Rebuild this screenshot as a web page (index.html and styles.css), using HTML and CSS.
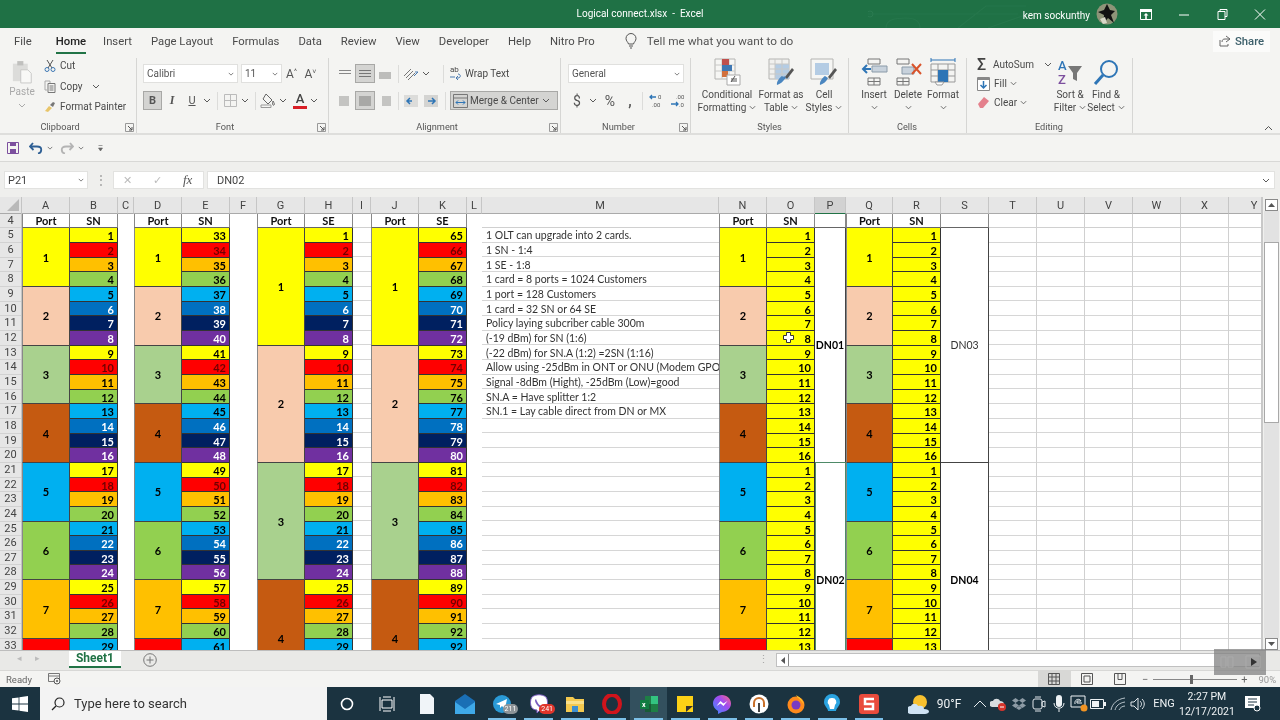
FILE: index.html
```html
<!DOCTYPE html>
<html lang="en">
<head>
<meta charset="utf-8">
<title>Logical connect.xlsx - Excel</title>
<link rel="stylesheet" href="styles.css">
</head>
<body>
<svg class="sprite" aria-hidden="true">
  <symbol id="chev" viewBox="0 0 8 5"><path d="M1 1l3 3 3-3" fill="none" stroke="#5a5a5a" stroke-width="1"/></symbol>
  <symbol id="launch" viewBox="0 0 9 9"><path d="M.5.5h8v8h-8z" fill="none" stroke="#999"/><path d="M3 3l4 4M7 4v3H4" fill="none" stroke="#555"/></symbol>
</svg>
<div class="app">
  <header class="titlebar">
    <svg class="circuit" viewBox="0 0 170 28" width="170" height="28"><path d="M0 14h150M18 28c0-9 10-10 20-10s14 4 14 10M90 28l28-22h40M120 28l40-14" fill="none" stroke="#2a7a50" stroke-width="1.2" opacity=".6"/><circle cx="2" cy="14" r="3" fill="none" stroke="#2a7a50"/></svg>
    <div></div>
    <div class="doc-title">Logical connect.xlsx&nbsp; - &nbsp;Excel</div>
    <div class="title-right">
      <span class="user">kem sockunthy</span>
      <svg class="avatar" viewBox="0 0 22 22" width="22" height="22"><circle cx="11" cy="11" r="10.5" fill="#8e9478"/><path d="M11 1l3 6 5 1-4 4 3 8-6-5-5 6 1-9-6-3 6-2z" fill="#111"/><path d="M4 16l5-2 2 6-4 1z" fill="#d8d8c8"/></svg>
      <svg class="win-btn" viewBox="0 0 12 11" width="12" height="11"><path d="M.5.5h11v10H.5z" fill="none" stroke="#fff"/><path d="M0 0h12v3H0zM6 4L3.500 6.500h1.700V10h1.600V6.500h1.700z" fill="#fff"/></svg>
      <svg class="win-btn" viewBox="0 0 12 11" width="12" height="11"><path d="M1 6h10" stroke="#fff"/></svg>
      <svg class="win-btn" viewBox="0 0 12 11" width="12" height="11"><path d="M2 2.500h7v8H2zM4 2.500V.5h7v7H9" fill="none" stroke="#fff"/></svg>
      <svg class="win-btn" viewBox="0 0 12 11" width="12" height="11"><path d="M1 .5l10 10M11 .5l-10 10" stroke="#fff"/></svg>
    </div>
  </header>

  <nav class="tabs">
    <span>File</span><span class="on">Home</span><span>Insert</span><span>Page Layout</span><span>Formulas</span><span>Data</span><span>Review</span><span>View</span><span>Developer</span><span>Help</span><span>Nitro Pro</span>
    <svg class="bulb" viewBox="0 0 12 16" width="12" height="16"><path d="M3.500 11C3 9 1 8 1 5.500a5 5 0 0 1 10 0C11 8 9 9 8.500 11zM4 13h4M5 15h2" fill="none" stroke="#555"/></svg>
    <span class="tell">Tell me what you want to do</span>
    <span class="share"><svg viewBox="0 0 12 12" width="12" height="12"><path d="M7 1l4 3-4 3M11 4H6C4 4 3 5 3 7M1 5v6h8V9" fill="none" stroke="#666"/></svg>Share</span>
  </nav>

  <section class="ribbon">
    <div class="group g-clip">
      <div class="gbody">
        <div class="paste">
          <svg viewBox="0 0 24 27" width="21" height="24"><path d="M1 4h17v20H1z" fill="#dcdcda"/><path d="M6 1h7v5H6z" fill="#c0c0be"/><path d="M10 11h8l4 4v11H10z" fill="#f8f8f6" stroke="#c4c4c2"/></svg>
          <span>Paste</span>
          <svg class="ch" viewBox="0 0 8 5" width="8" height="5"><path d="M1 1l3 3 3-3" fill="none" stroke="#aaa"/></svg>
        </div>
        <div class="small-col">
          <div class="srow"><svg viewBox="0 0 12 13" width="12" height="13"><path d="M3 1l5 8M9 1L4 9" stroke="#555" fill="none"/><circle cx="3" cy="10.500" r="2" fill="none" stroke="#3f78b4"/><circle cx="9" cy="10.500" r="2" fill="none" stroke="#3f78b4"/></svg>Cut</div>
          <div class="srow"><svg viewBox="0 0 12 13" width="12" height="13"><path d="M1 1h5v2M1 1v9h2" fill="none" stroke="#aaa"/><path d="M4 3.500h7v9H4zM5.500 6h4M5.500 8h4M5.500 10h4" fill="none" stroke="#777"/></svg>Copy<svg class="ch ml" width="8" height="5"><use href="#chev"/></svg></div>
          <div class="srow"><svg viewBox="0 0 12 13" width="12" height="13"><path d="M1 11l4-5 3 2-4 4z" fill="#e8c56a"/><path d="M6 5l3-3 2 1-2 4z" fill="#777"/></svg>Format Painter</div>
        </div>
      </div>
      <div class="glabel lp">Clipboard<svg class="launcher" width="9" height="9"><use href="#launch"/></svg></div>
    </div>

    <div class="group g-font">
      <div class="gbody stack">
        <div class="trow">
          <div class="combo w95">Calibri<svg class="ch" width="6" height="4"><use href="#chev"/></svg></div>
          <div class="combo w41">11<svg class="ch" width="6" height="4"><use href="#chev"/></svg></div>
          <span class="ab">A<sup>^</sup></span><span class="ab">A<sup>˅</sup></span>
        </div>
        <div class="trow">
          <span class="tb active w19"><b>B</b></span><span class="tb w20"><i class="serif">I</i></span><span class="tb w20"><u>U</u></span><svg class="ch w10" width="8" height="5"><use href="#chev"/></svg>
          <i class="vs"></i>
          <span class="tb w20"><svg viewBox="0 0 13 13" width="13" height="13"><path d="M.5.5h12v12H.5zM6.500.5v12M.5 6.500h12" fill="none" stroke="#bbb"/></svg></span><svg class="ch w10" width="8" height="5"><use href="#chev"/></svg>
          <i class="vs"></i>
          <span class="tb w20"><svg viewBox="0 0 16 15" width="16" height="15"><path d="M6 1l6 6-4 4-5-5zM13 8c1 2 2 3 1 4s-2-1-1-4z" fill="#f4f4f2" stroke="#666"/><path d="M1 12h10v2.500H1z" fill="#f4f4f2" stroke="#999"/></svg></span><svg class="ch w10" width="8" height="5"><use href="#chev"/></svg>
          <span class="tb w20 a-red">A</span><svg class="ch w10" width="8" height="5"><use href="#chev"/></svg>
        </div>
      </div>
      <div class="glabel lp">Font<svg class="launcher" width="9" height="9"><use href="#launch"/></svg></div>
    </div>

    <div class="group g-align">
      <div class="gbody stack">
        <div class="trow">
          <span class="tb w20"><svg viewBox="0 0 14 14" width="14" height="14"><path d="M1 3.500h12M1 6.500h12" stroke="#888"/></svg></span>
          <span class="tb active w20"><svg viewBox="0 0 14 14" width="14" height="14"><path d="M1 3.500h12M1 6.500h12M1 9.500h12" stroke="#777"/></svg></span>
          <span class="tb w20"><svg viewBox="0 0 14 14" width="14" height="14"><path d="M1 5h12v7H1z" fill="#bdbdbb"/></svg></span>
          <i class="vs v3"></i>
          <span class="tb w20"><svg viewBox="0 0 16 14" width="16" height="14"><path d="M1 9l7-7M3 11l7-7M5 13l7-7" stroke="#777"/><path d="M11 9l4-4-3 0" fill="none" stroke="#4a7ab0"/></svg></span><svg class="ch w10" width="8" height="5"><use href="#chev"/></svg>
          <i class="vs v12"></i>
          <span class="wrap"><svg viewBox="0 0 14 14" width="14" height="14"><path d="M1 10h5M9 7c3 0 3 4 0 4H7m2-2l-2 2 2 2" fill="none" stroke="#4a7ab0"/></svg><span class="ablab">ab</span>Wrap Text</span>
        </div>
        <div class="trow">
          <span class="tb w20"><svg viewBox="0 0 14 14" width="14" height="14"><path d="M1 2h10v10H1z" fill="#c4c4c2"/></svg></span>
          <span class="tb active w20"><svg viewBox="0 0 14 14" width="14" height="14"><path d="M1 2h12v10H1z" fill="#a8a8a6"/></svg></span>
          <span class="tb w20"><svg viewBox="0 0 14 14" width="14" height="14"><path d="M4 2h9v10H4z" fill="#c4c4c2"/></svg></span>
          <i class="vs v3"></i>
          <span class="tb w20"><svg viewBox="0 0 16 14" width="16" height="14"><path d="M1 1h14v12H1z" fill="#dcdcda"/><path d="M9 7H4m3-3L4 7l3 3" fill="none" stroke="#2e75b6" stroke-width="1.500"/></svg></span>
          <span class="tb w20"><svg viewBox="0 0 16 14" width="16" height="14"><path d="M1 1h14v12H1z" fill="#d4d4d2"/><path d="M5 7h6M9 4l3 3-3 3" fill="none" stroke="#2e75b6" stroke-width="1.500"/></svg></span>
          <i class="vs v4"></i>
          <span class="merge"><svg viewBox="0 0 15 14" width="15" height="14"><path d="M.5.5h14v13H.5zM.5 4h14" fill="none" stroke="#777"/><path d="M3 8.500h9M5 6.500l-2 2 2 2M10 6.500l2 2-2 2" fill="none" stroke="#2e75b6"/></svg><span class="mtext">Merge &amp; Center</span><svg class="ch" width="8" height="5"><use href="#chev"/></svg></span>
        </div>
      </div>
      <div class="glabel lp">Alignment<svg class="launcher" width="9" height="9"><use href="#launch"/></svg></div>
    </div>

    <div class="group g-num">
      <div class="gbody stack">
        <div class="trow"><div class="combo w116">General<svg class="ch" width="6" height="4"><use href="#chev"/></svg></div></div>
        <div class="trow">
          <span class="tb w18 big-t">$</span><svg class="ch w14" width="8" height="5"><use href="#chev"/></svg>
          <span class="tb w20 big-t">%</span>
          <span class="tb w20 big-t"><b>,</b></span>
          <i class="vs v2"></i>
          <span class="tb w22"><svg viewBox="0 0 17 15" width="17" height="15"><path d="M8 4H2m2-2L2 4l2 2" fill="none" stroke="#2e75b6" stroke-width="1.300"/><text x="10" y="6" class="t6">0</text><text x="4" y="14" class="t6">.00</text></svg></span>
          <span class="tb w22"><svg viewBox="0 0 17 15" width="17" height="15"><text x="6" y="6" class="t6">.00</text><path d="M1 11h7M6 9l2 2-2 2" fill="none" stroke="#2e75b6" stroke-width="1.300"/><text x="9" y="14" class="t6">.0</text></svg></span>
        </div>
      </div>
      <div class="glabel lp">Number<svg class="launcher" width="9" height="9"><use href="#launch"/></svg></div>
    </div>

    <div class="group g-styles">
      <div class="gbody">
        <div class="big w54"><svg viewBox="0 0 28 28" width="28" height="28"><path d="M2 1h20v20H2z" fill="#f6f6f4" stroke="#b4b4b2"/><path d="M2 7h20M2 13h20M9 1v20M16 1v20" stroke="#c8c8c6"/><path d="M9 1h7v6H9z" fill="#c0504d"/><path d="M9 7h10v6H9z" fill="#3f78b4"/><path d="M9 13h6v6H9z" fill="#d2703c"/><path d="M14 17h13v10H14z" fill="#fff" stroke="#aaa"/><path d="M18 24l4-6M18 21h6M18 23h6" stroke="#555"/></svg><span>Conditional</span><span>Formatting<svg class="ch" width="7" height="5"><use href="#chev"/></svg></span></div>
        <div class="big w54"><svg viewBox="0 0 28 28" width="28" height="28"><path d="M2 1h20v20H2z" fill="#f0f0ee" stroke="#b4b4b2"/><path d="M8 6h14v15H8z" fill="#b4cce4"/><path d="M2 6h20M2 11h20M2 16h20M8 1v20M15 1v20" stroke="#c8c8c6"/><path d="M14 24l3-6 2 2z" fill="#3f78b4"/><path d="M18 19l7-9 2 2-7 9z" fill="#555"/><path d="M10 27c3-1 6-3 8-7l-3-2c-2 1-6 6-5 9z" fill="#4a86c0"/></svg><span>Format as</span><span>Table<svg class="ch" width="7" height="5"><use href="#chev"/></svg></span></div>
        <div class="big w32"><svg viewBox="0 0 28 28" width="28" height="28"><path d="M1 1h22v20H1z" fill="#f6f6f4" stroke="#b4b4b2"/><path d="M5 5h14v12H5z" fill="#b4cce4"/><path d="M18 19l7-9 2 2-7 9z" fill="#555"/><path d="M10 27c3-1 6-3 8-7l-3-2c-2 1-6 6-5 9z" fill="#4a86c0"/></svg><span>Cell</span><span>Styles<svg class="ch" width="7" height="5"><use href="#chev"/></svg></span></div>
      </div>
      <div class="glabel">Styles</div>
    </div>

    <div class="group g-cells">
      <div class="gbody">
        <div class="big w34"><svg viewBox="0 0 28 28" width="28" height="28"><path d="M8 1h12v5H8zM8 20h12v7H8zM14 20v7M8 23.500h12" fill="none" stroke="#777"/><path d="M3 11h8m-4-4l-4 4 4 4" fill="none" stroke="#2e75b6" stroke-width="2"/><path d="M12 8h15v6H12z" fill="#c8d2dc" stroke="#8a9aa8"/></svg><span>Insert</span><span class="chline"><svg class="ch" width="7" height="5"><use href="#chev"/></svg></span></div>
        <div class="big w34"><svg viewBox="0 0 28 28" width="28" height="28"><path d="M3 1h12v5H3zM3 20h12v7H3zM9 20v7M3 23.500h12" fill="none" stroke="#777"/><path d="M8 9h12v7H8z" fill="#c8d2dc" stroke="#8a9aa8"/><path d="M18 6l9 10M27 6l-9 10" stroke="#d9542c" stroke-width="2"/></svg><span>Delete</span><span class="chline"><svg class="ch" width="7" height="5"><use href="#chev"/></svg></span></div>
        <div class="big w36"><svg viewBox="0 0 28 28" width="28" height="28"><path d="M2 2h24M2 0v4M26 0v4" fill="none" stroke="#2e75b6"/><path d="M2 6h24v18H2zM2 12h24M2 18h24M9 6v18M19 6v18" fill="none" stroke="#999"/><path d="M9 12h10v12H9z" fill="#2e75b6"/><path d="M6 24h9l-2 3H8z" fill="#fff" stroke="#999"/></svg><span>Format</span><span class="chline"><svg class="ch" width="7" height="5"><use href="#chev"/></svg></span></div>
      </div>
      <div class="glabel">Cells</div>
    </div>

    <div class="group g-edit">
      <div class="gbody">
        <div class="small-col ed">
          <div class="srow"><span class="sigma">Σ</span>AutoSum<svg class="ch ml10" width="8" height="5"><use href="#chev"/></svg></div>
          <div class="srow"><svg viewBox="0 0 13 14" width="13" height="14"><path d="M.5.5h12v13H.5z" fill="#fff" stroke="#888"/><path d="M1 1h11v2H1z" fill="#888"/><path d="M6.500 4v7m-3-3l3 3 3-3" fill="none" stroke="#2e75b6" stroke-width="1.500"/></svg>Fill<svg class="ch" width="7" height="5"><use href="#chev"/></svg></div>
          <div class="srow"><svg viewBox="0 0 13 13" width="13" height="13"><path d="M1 8l6-7 5 4-6 7H3z" fill="#e4808c"/></svg>Clear<svg class="ch" width="7" height="5"><use href="#chev"/></svg></div>
        </div>
        <div class="big w36"><svg viewBox="0 0 28 28" width="28" height="28"><text x="2" y="12" class="az a1">A</text><text x="2" y="26" class="az a2">Z</text><path d="M12 8h14l-5 7v8l-4-2v-6z" fill="#777"/></svg><span>Sort &amp;</span><span>Filter<svg class="ch" width="7" height="5"><use href="#chev"/></svg></span></div>
        <div class="big w36"><svg viewBox="0 0 28 28" width="28" height="28"><circle cx="17" cy="11" r="8" fill="none" stroke="#2e75b6" stroke-width="2"/><path d="M11 17L3 26" stroke="#2e75b6" stroke-width="3"/></svg><span>Find &amp;</span><span>Select<svg class="ch" width="7" height="5"><use href="#chev"/></svg></span></div>
      </div>
      <div class="glabel">Editing</div>
    </div>
    <svg class="collapse" viewBox="0 0 9 6" width="9" height="6"><path d="M1 5l3.500-3.500L8 5" fill="none" stroke="#555"/></svg>
  </section>

  <div class="qat">
    <svg viewBox="0 0 12 12" width="12" height="12"><path d="M.5.5h11v11H.5z" fill="#f4f4f2" stroke="#7c4f9e"/><path d="M3 1h6v3H3zM3 7h6v4.500H3z" fill="#7c4f9e"/></svg>
    <svg class="q-undo" viewBox="0 0 14 12" width="14" height="12"><path d="M4 1L1 4.500 4.500 8M1.500 4.500H8c6 0 5 6 1 7" fill="none" stroke="#2e5f94" stroke-width="1.800"/></svg>
    <svg class="ch q-ch" width="6" height="4"><use href="#chev"/></svg>
    <svg class="q-redo" viewBox="0 0 14 12" width="14" height="12"><path d="M10 1l3 3.500L9.500 8M12.500 4.500H6c-6 0-5 6-1 7" fill="none" stroke="#b4b4b4" stroke-width="1.800"/></svg>
    <svg class="ch q-ch" width="6" height="4"><use href="#chev"/></svg>
    <svg class="q-more" viewBox="0 0 5 7" width="5" height="7"><path d="M.5.5h4M.5 3l2 3 2-3z" fill="#666" stroke="#666" stroke-width=".6"/></svg>
  </div>

  <div class="formula">
    <div class="namebox">P21<svg class="ch" width="6" height="4"><use href="#chev"/></svg></div>
    <div class="dots">⋮</div>
    <div class="fx-box"><span class="x">✕</span><span class="ok">✓</span><span class="fx">fx</span></div>
    <div class="finput">DN02<svg class="ch" width="8" height="5"><use href="#chev"/></svg></div>
  </div>

  <main class="grid-wrap">
    <div class="sheet">
      <div class="rowhdr">
        <div class="corner"><svg viewBox="0 0 12 12" width="12" height="12"><path d="M12 0v12H0z" fill="#b9b9b9"/></svg></div>
        <div class="rh h4">4</div><div class="rh">5</div><div class="rh">6</div><div class="rh">7</div><div class="rh">8</div><div class="rh">9</div><div class="rh">10</div><div class="rh">11</div><div class="rh">12</div><div class="rh">13</div><div class="rh">14</div><div class="rh">15</div><div class="rh">16</div><div class="rh">17</div><div class="rh">18</div><div class="rh">19</div><div class="rh">20</div><div class="rh">21</div><div class="rh">22</div><div class="rh">23</div><div class="rh">24</div><div class="rh">25</div><div class="rh">26</div><div class="rh">27</div><div class="rh">28</div><div class="rh">29</div><div class="rh">30</div><div class="rh">31</div><div class="rh">32</div><div class="rh">33</div>
      </div>

      <div class="col w48"><div class="colh">A</div><div class="hd edge">Port</div><div class="pt r4 y edge">1</div><div class="pt r4 pe edge">2</div><div class="pt r4 lg edge">3</div><div class="pt r4 br edge">4</div><div class="pt r4 s edge">5</div><div class="pt r4 g edge">6</div><div class="pt r4 o edge">7</div><div class="pt r4 r edge"></div></div>
      <div class="col w48"><div class="colh">B</div><div class="hd">SN</div>
        <div class="c y">1</div><div class="c r">2</div><div class="c o">3</div><div class="c g">4</div><div class="c s">5</div><div class="c b">6</div><div class="c n">7</div><div class="c p">8</div><div class="c y">9</div><div class="c r">10</div><div class="c o">11</div><div class="c g">12</div><div class="c s">13</div><div class="c b">14</div><div class="c n">15</div><div class="c p">16</div><div class="c y">17</div><div class="c r">18</div><div class="c o">19</div><div class="c g">20</div><div class="c s">21</div><div class="c b">22</div><div class="c n">23</div><div class="c p">24</div><div class="c y">25</div><div class="c r">26</div><div class="c o">27</div><div class="c g">28</div><div class="c s">29</div></div>
      <div class="col w16"><div class="colh">C</div></div>
      <div class="col w48"><div class="colh">D</div><div class="hd edge">Port</div><div class="pt r4 y edge">1</div><div class="pt r4 pe edge">2</div><div class="pt r4 lg edge">3</div><div class="pt r4 br edge">4</div><div class="pt r4 s edge">5</div><div class="pt r4 g edge">6</div><div class="pt r4 o edge">7</div><div class="pt r4 r edge"></div></div>
      <div class="col w48"><div class="colh">E</div><div class="hd">SN</div>
        <div class="c y">33</div><div class="c r">34</div><div class="c o">35</div><div class="c g">36</div><div class="c s">37</div><div class="c b">38</div><div class="c n">39</div><div class="c p">40</div><div class="c y">41</div><div class="c r">42</div><div class="c o">43</div><div class="c g">44</div><div class="c s">45</div><div class="c b">46</div><div class="c n">47</div><div class="c p">48</div><div class="c y">49</div><div class="c r">50</div><div class="c o">51</div><div class="c g">52</div><div class="c s">53</div><div class="c b">54</div><div class="c n">55</div><div class="c p">56</div><div class="c y">57</div><div class="c r">58</div><div class="c o">59</div><div class="c g">60</div><div class="c s">61</div></div>
      <div class="col w27"><div class="colh">F</div></div>
      <div class="col w48"><div class="colh">G</div><div class="hd edge">Port</div><div class="pt r8 y edge">1</div><div class="pt r8 pe edge">2</div><div class="pt r8 lg edge">3</div><div class="pt r8 br edge">4</div></div>
      <div class="col w48"><div class="colh">H</div><div class="hd">SE</div>
        <div class="c y">1</div><div class="c r">2</div><div class="c o">3</div><div class="c g">4</div><div class="c s">5</div><div class="c b">6</div><div class="c n">7</div><div class="c p">8</div><div class="c y">9</div><div class="c r">10</div><div class="c o">11</div><div class="c g">12</div><div class="c s">13</div><div class="c b">14</div><div class="c n">15</div><div class="c p">16</div><div class="c y">17</div><div class="c r">18</div><div class="c o">19</div><div class="c g">20</div><div class="c s">21</div><div class="c b">22</div><div class="c n">23</div><div class="c p">24</div><div class="c y">25</div><div class="c r">26</div><div class="c o">27</div><div class="c g">28</div><div class="c s">29</div></div>
      <div class="col w18"><div class="colh">I</div><div class="blank hd-b"></div><div class="gridbody"></div></div>
      <div class="col w48"><div class="colh">J</div><div class="hd edge">Port</div><div class="pt r8 y edge">1</div><div class="pt r8 pe edge">2</div><div class="pt r8 lg edge">3</div><div class="pt r8 br edge">4</div></div>
      <div class="col w48"><div class="colh">K</div><div class="hd">SE</div>
        <div class="c y">65</div><div class="c r">66</div><div class="c o">67</div><div class="c g">68</div><div class="c s">69</div><div class="c b">70</div><div class="c n">71</div><div class="c p">72</div><div class="c y">73</div><div class="c r">74</div><div class="c o">75</div><div class="c g">76</div><div class="c s">77</div><div class="c b">78</div><div class="c n">79</div><div class="c p">80</div><div class="c y">81</div><div class="c r">82</div><div class="c o">83</div><div class="c g">84</div><div class="c s">85</div><div class="c b">86</div><div class="c n">87</div><div class="c p">88</div><div class="c y">89</div><div class="c r">90</div><div class="c o">91</div><div class="c g">92</div><div class="c s">92</div></div>
      <div class="col w15"><div class="colh">L</div></div>
      <div class="col w237"><div class="colh">M</div><div class="blank hd-b"></div>
        <div class="gridbody notes">
          <div>1 OLT can upgrade into 2 cards.</div>
          <div>1 SN - 1:4</div>
          <div>1 SE - 1:8</div>
          <div>1 card = 8 ports = 1024 Customers</div>
          <div>1 port = 128 Customers</div>
          <div>1 card = 32 SN or 64 SE</div>
          <div>Policy laying subcriber cable 300m</div>
          <div>(-19 dBm) for SN (1:6)</div>
          <div>(-22 dBm) for SN.A (1:2) =2SN (1:16)</div>
          <div>Allow using -25dBm in ONT or ONU (Modem GPON)</div>
          <div>Signal -8dBm (Hight), -25dBm (Low)=good</div>
          <div>SN.A = Have splitter 1:2</div>
          <div>SN.1 = Lay cable direct from DN or MX</div>
        </div>
      </div>
      <div class="col w48"><div class="colh">N</div><div class="hd edge">Port</div><div class="pt r4 y edge">1</div><div class="pt r4 pe edge">2</div><div class="pt r4 lg edge">3</div><div class="pt r4 br edge">4</div><div class="pt r4 s edge">5</div><div class="pt r4 g edge">6</div><div class="pt r4 o edge">7</div><div class="pt r4 r edge"></div></div>
      <div class="col w48"><div class="colh">O</div><div class="hd">SN</div>
        <div class="c y">1</div><div class="c y">2</div><div class="c y">3</div><div class="c y">4</div><div class="c y">5</div><div class="c y">6</div><div class="c y">7</div><div class="c y">8</div><div class="c y">9</div><div class="c y">10</div><div class="c y">11</div><div class="c y">12</div><div class="c y">13</div><div class="c y">14</div><div class="c y">15</div><div class="c y">16</div><div class="c y">1</div><div class="c y">2</div><div class="c y">3</div><div class="c y">4</div><div class="c y">5</div><div class="c y">6</div><div class="c y">7</div><div class="c y">8</div><div class="c y">9</div><div class="c y">10</div><div class="c y">11</div><div class="c y">12</div><div class="c y">13</div></div>
      <div class="col w31"><div class="colh selh">P</div><div class="hd"></div><div class="pt r16 dn">DN01</div><div class="pt r16 dn sel">DN02</div></div>
      <div class="col w47"><div class="colh">Q</div><div class="hd edge">Port</div><div class="pt r4 y edge">1</div><div class="pt r4 pe edge">2</div><div class="pt r4 lg edge">3</div><div class="pt r4 br edge">4</div><div class="pt r4 s edge">5</div><div class="pt r4 g edge">6</div><div class="pt r4 o edge">7</div><div class="pt r4 r edge"></div></div>
      <div class="col w48"><div class="colh">R</div><div class="hd">SN</div>
        <div class="c y">1</div><div class="c y">2</div><div class="c y">3</div><div class="c y">4</div><div class="c y">5</div><div class="c y">6</div><div class="c y">7</div><div class="c y">8</div><div class="c y">9</div><div class="c y">10</div><div class="c y">11</div><div class="c y">12</div><div class="c y">13</div><div class="c y">14</div><div class="c y">15</div><div class="c y">16</div><div class="c y">1</div><div class="c y">2</div><div class="c y">3</div><div class="c y">4</div><div class="c y">5</div><div class="c y">6</div><div class="c y">7</div><div class="c y">8</div><div class="c y">9</div><div class="c y">10</div><div class="c y">11</div><div class="c y">12</div><div class="c y">13</div></div>
      <div class="col w48"><div class="colh">S</div><div class="hd"></div><div class="pt r16 dn plain">DN03</div><div class="pt r16 dn">DN04</div></div>
      <div class="col w48 gc"><div class="colh">T</div><div class="blank hd-b"></div><div class="gridbody"></div></div>
      <div class="col w48 gc"><div class="colh">U</div><div class="blank hd-b"></div><div class="gridbody"></div></div>
      <div class="col w48 gc"><div class="colh">V</div><div class="blank hd-b"></div><div class="gridbody"></div></div>
      <div class="col w48 gc"><div class="colh">W</div><div class="blank hd-b"></div><div class="gridbody"></div></div>
      <div class="col w48 gc"><div class="colh">X</div><div class="blank hd-b"></div><div class="gridbody"></div></div>
      <div class="col w34 gc last"><div class="colh yh">Y</div><div class="blank hd-b"></div><div class="gridbody"></div></div>
      <svg class="cell-cursor" viewBox="0 0 11 11" width="11" height="11"><path d="M3.500.5h4v3h3v4h-3v3h-4v-3h-3v-4h3z" fill="#fff" stroke="#333"/></svg>
    </div>
    <aside class="vscroll">
      <span class="sbtn"><svg viewBox="0 0 7 4" width="7" height="4"><path d="M3.500 0L7 4H0z" fill="#555"/></svg></span>
      <div class="vtrack"><div class="vthumb"></div></div>
      <span class="sbtn"><svg viewBox="0 0 7 4" width="7" height="4"><path d="M3.500 4L7 0H0z" fill="#555"/></svg></span>
    </aside>
  </main>

  <div class="tabstrip">
    <div class="tabnav"><span>◂</span><span>▸</span></div>
    <div class="sheet-tab">Sheet1</div>
    <svg class="add" viewBox="0 0 14 14" width="14" height="14"><circle cx="7" cy="7" r="6.300" fill="none" stroke="#777"/><path d="M7 3.500v7M3.500 7h7" stroke="#777"/></svg>
    <span class="hdots">⋮</span>
    <div class="hscroll">
      <span class="hbtn"><svg viewBox="0 0 4 7" width="4" height="7"><path d="M0 3.500L4 0v7z" fill="#555"/></svg></span>
      <div class="hthumb"></div>
    </div>
    <div class="video-ov"><svg viewBox="0 0 16 14" width="16" height="14"><path d="M2 2h5v10H2zM9 2h5v10H9z" fill="none" stroke="#aaa"/></svg><svg viewBox="0 0 16 14" width="16" height="14"><path d="M1 1h14v12H1z" fill="none" stroke="#aaa"/><path d="M6 3l6 4-6 4z" fill="#333"/></svg></div>
  </div>

  <footer class="status">
    <span class="ready">Ready</span>
    <svg class="macro" viewBox="0 0 13 12" width="13" height="12"><path d="M.5.5h11v8H.5zM.5 3h11" fill="none" stroke="#777"/><circle cx="9" cy="8" r="3" fill="#f4f4f2" stroke="#555"/><circle cx="9" cy="8" r="1" fill="#555"/></svg>
    <div class="views">
      <span class="view on"><svg viewBox="0 0 12 12" width="12" height="12"><path d="M.5.5h11v11H.5zM4 .5v11M8 .5v11M.5 4h11M.5 8h11" fill="none" stroke="#555"/></svg></span>
      <span class="view"><svg viewBox="0 0 12 12" width="12" height="12"><path d="M.5.5h11v11H.5zM3 3h6v6H3z" fill="none" stroke="#555"/></svg></span>
      <span class="view"><svg viewBox="0 0 12 12" width="12" height="12"><path d="M.5.5h11v11H.5zM4 .5v6h4v-6" fill="none" stroke="#555"/></svg></span>
    </div>
    <span class="zm">−</span>
    <div class="slider"><i></i></div>
    <span class="zm">+</span>
    <span class="pct">90%</span>
  </footer>

  <footer class="taskbar">
    <div class="start"><svg viewBox="0 0 16 16" width="16" height="16"><path d="M0 2.300L6.600 1.400v6.200H0zM7.400 1.300L16 0v7.600H7.400zM0 8.400h6.600v6.200L0 13.700zM7.400 8.400H16V16l-8.600-1.300z" fill="#fff"/></svg></div>
    <div class="search"><svg viewBox="0 0 14 14" width="14" height="14"><circle cx="8.500" cy="5.500" r="4.500" fill="none" stroke="#222" stroke-width="1.200"/><path d="M5 9l-4 4" stroke="#222" stroke-width="1.200"/></svg><span>Type here to search</span></div>
    <div class="apps">
      <span class="app-i wide"><svg viewBox="0 0 14 14" width="14" height="14"><circle cx="7" cy="7" r="5.500" fill="none" stroke="#fff" stroke-width="1.600"/></svg></span>
      <span class="app-i wide"><svg viewBox="0 0 16 16" width="16" height="16"><path d="M3 4h10v8H3zM1 1v14M15 1v14M4 1h8M4 15h8" fill="none" stroke="#fff"/></svg></span>
      <span class="app-i wide"><svg viewBox="0 0 16 20" width="16" height="20"><path d="M1 0h10l4 4v16H1z" fill="#f0f4f8"/></svg></span>
      <span class="app-i"><svg viewBox="0 0 22 20" width="22" height="20"><path d="M11 0l10 7v13H1V7z" fill="#1a6fb5"/><path d="M1 8l10 7 10-7v12H1z" fill="#3fa9e8"/></svg></span>
      <span class="app-i run"><svg viewBox="0 0 20 20" width="20" height="20"><circle cx="10" cy="10" r="9" fill="#2a9ad6"/><path d="M4 10l11-5-2 10-3-3-2 2v-3z" fill="#fff"/></svg><em class="badge grey">211</em></span>
      <span class="app-i run"><svg viewBox="0 0 20 20" width="20" height="20"><path d="M3 3c4-3 10-3 14 0 2 3 2 8 0 11-2 2-4 2-6 2l-3 3v-3c-2 0-4-1-5-2-2-3-2-8 0-11z" fill="#fff" stroke="#7a5bbf"/><path d="M7 5c2 5 3 6 7 8l-2 1C9 13 6 9 6 6z" fill="#7a5bbf"/></svg><em class="badge red">241</em></span>
      <span class="app-i run"><svg viewBox="0 0 20 18" width="20" height="18"><path d="M1 2h7l2 2h9v13H1z" fill="#f4c94f"/><path d="M1 6h18v3H1z" fill="#f9e08a"/><path d="M7 11h6v6H7z" fill="#3d8fd1"/></svg></span>
      <span class="app-i run"><svg viewBox="0 0 20 20" width="20" height="20"><ellipse cx="10" cy="10" rx="8" ry="9" fill="none" stroke="#d0141c" stroke-width="4"/></svg></span>
      <span class="app-i run cur"><svg viewBox="0 0 20 20" width="20" height="20"><path d="M6 2h13v16H6z" fill="#1e7e45"/><path d="M12 2h7v8h-7z" fill="#33c481"/><path d="M6 10h6v8H6z" fill="#185c37"/><path d="M1 6h9v9H1z" fill="#107c41"/><text x="3" y="13" class="xl">x</text></svg></span>
      <span class="app-i run"><svg viewBox="0 0 20 20" width="20" height="20"><path d="M2 2h16v16H2z" fill="#fcd116"/><path d="M11 18v-6h7z" fill="#333"/></svg></span>
      <span class="app-i run"><svg viewBox="0 0 20 20" width="20" height="20"><defs><linearGradient id="ms" x1="0" y1="1" x2="1" y2="0"><stop offset="0" stop-color="#3a8cff"/><stop offset=".6" stop-color="#a24bf0"/><stop offset="1" stop-color="#ff6b7d"/></linearGradient></defs><path d="M10 1c5 0 9 4 9 8.500S15 18 10 18l-4 2v-3c-3-2-5-4-5-7.500C1 5 5 1 10 1z" fill="url(#ms)"/><path d="M4.500 12l4-5 3 2.500L15.500 7l-4 5-3-2.500z" fill="#fff"/></svg></span>
      <span class="app-i run"><svg viewBox="0 0 20 20" width="20" height="20"><circle cx="10" cy="10" r="9.500" fill="#fff"/><path d="M5 13V9a5 5 0 0 1 10 0v4" fill="none" stroke="#c9702a" stroke-width="2"/><path d="M9 9h2v9H9z" fill="#444"/></svg></span>
      <span class="app-i run"><svg viewBox="0 0 20 20" width="20" height="20"><circle cx="10" cy="11" r="8.500" fill="#ff8a1c"/><path d="M10 1c3 2 7 4 8 10-3-6-6-6-8-10z" fill="#ffc42a"/><circle cx="10" cy="11" r="4.500" fill="#7a3bc4"/></svg></span>
      <span class="app-i run"><svg viewBox="0 0 20 22" width="20" height="22"><path d="M10 1a8 8 0 0 1 8 8c0 4-4 6-4 9H6c0-3-4-5-4-9a8 8 0 0 1 8-8z" fill="#2aa3e0"/><path d="M10 5a4 4 0 0 1 3 7l-1 4H8l-1-4a4 4 0 0 1 3-7z" fill="#fff"/></svg></span>
      <span class="app-i run"><svg viewBox="0 0 20 20" width="20" height="20"><rect x="0" y="0" width="20" height="20" rx="3" fill="#e94b3c"/><path d="M15 5H6v5h8v5H5" fill="none" stroke="#fff" stroke-width="2.500"/></svg></span>
    </div>
    <div class="tray">
      <span class="weather"><svg viewBox="0 0 24 22" width="24" height="22"><circle cx="12" cy="9" r="7" fill="#f7c02e"/><path d="M3 21a4 4 0 0 1 0-8c1-3 6-3 7 0 3-1 6 0 6 3 3 0 5 1 5 2.500S19 21 17 21z" fill="#cfe3f4"/></svg></span>
      <span class="temp">90°F</span>
      <span class="ti"><svg viewBox="0 0 14 8" width="14" height="8"><path d="M1 7l6-6 6 6" fill="none" stroke="#e6ecf0"/></svg></span>
      <span class="ti"><svg viewBox="0 0 18 16" width="18" height="16"><path d="M2 11a3 3 0 0 1 1-6c1-3 6-3 7 0 2 0 4 1 4 3H9l-1 3z" fill="#d8dde0"/><circle cx="12" cy="11" r="4" fill="#d5352c"/><path d="M10 11h4" stroke="#fff"/></svg></span>
      <span class="ti"><svg viewBox="0 0 14 14" width="14" height="14"><path d="M3.500 1L7 3.500 3.500 6 0 3.500zM10.500 1L14 3.500 10.500 6 7 3.500zM3.500 6L7 8.500 3.500 11 0 8.500zM10.500 6L14 8.500 10.500 11 7 8.500zM7 9l3 2-3 2-3-2z" fill="#8d9ba5"/></svg></span>
      <span class="ti"><svg viewBox="0 0 14 16" width="14" height="16"><rect x="1" y="3" width="9" height="10" rx="2" fill="none" stroke="#dfe5e9"/><path d="M10 6l3-1v6l-3-1zM3 1h6M3 15h6" fill="none" stroke="#dfe5e9"/></svg></span>
      <span class="ti"><svg viewBox="0 0 12 18" width="12" height="18"><rect x="3" y="0" width="6" height="12" rx="3" fill="#eef2f4"/><path d="M1 8c0 7 10 7 10 0M6 14v3" fill="none" stroke="#eef2f4"/></svg></span>
      <span class="ti"><svg viewBox="0 0 18 17" width="18" height="17"><path d="M1 1h14v11H1z" fill="none" stroke="#eef2f4"/><path d="M5 9c-1-5 5-6 6-3H7v2h5" fill="none" stroke="#eef2f4"/><circle cx="14" cy="13" r="3.500" fill="#f29423"/></svg></span>
      <span class="ti"><svg viewBox="0 0 16 10" width="16" height="10"><path d="M.5.5h13v9H.5z" fill="none" stroke="#eef2f4"/><path d="M2 2h7v6H2z" fill="#eef2f4"/><path d="M14 3h2v4h-2z" fill="#eef2f4"/></svg></span>
      <span class="ti"><svg viewBox="0 0 16 14" width="16" height="14"><path d="M1 13C2 7 7 2 15 1M5 13c1-4 4-7 10-8M9 13c1-2 3-4 6-4" fill="none" stroke="#b7c3ca"/></svg></span>
      <span class="ti"><svg viewBox="0 0 16 14" width="16" height="14"><path d="M1 5h3l4-4v12l-4-4H1zM10 4c2 2 2 4 0 6M12 2c3 3 3 7 0 10" fill="none" stroke="#dfe5e9"/></svg></span>
      <span class="eng">ENG</span>
      <span class="clock"><span>2:27 PM</span><span>12/17/2021</span></span>
      <span class="notif"><svg viewBox="0 0 16 16" width="16" height="16"><path d="M0 0h15v12H0z" fill="#fff"/><path d="M3 3h9M3 6h9M3 9h6" stroke="#1b3340"/><circle cx="12" cy="12" r="3" fill="#1b3340" stroke="#fff"/></svg></span>
    </div>
  </footer>
</div>
</body>
</html>
```

FILE: styles.css
```css
* { box-sizing: border-box; }
html, body { margin: 0; padding: 0; height: 720px; overflow: hidden; background: #fff; }
body { font-family: Roboto, "Open Sans", "Liberation Sans", sans-serif; color: #444; }
.sprite { position: absolute; width: 0; height: 0; }
.app { width: 1280px; height: 720px; display: flex; flex-direction: column; overflow: hidden; background: #f4f4f2; filter: blur(.3px); }
svg { flex: none; display: block; }
svg.ch { display: inline-block; }

/* title bar */
.titlebar { position: relative; flex: none; height: 28px; background: #1f7145; display: grid; grid-template-columns: 1fr auto 1fr; align-items: center; color: #fff; font-size: 10px; }
.circuit { position: absolute; left: 868px; top: 0; }
.doc-title { position: relative; top: -1px; }
.title-right { position: relative; display: flex; align-items: center; justify-content: flex-end; padding-right: 14px; }
.user { margin-right: 6px; position: relative; top: 1px; }
.avatar { margin-right: 22px; }
.win-btn { margin-right: 26px; }
.win-btn:last-child { margin-right: 0; }

/* tabs */
.tabs { flex: none; height: 27px; display: flex; align-items: center; gap: 19px; padding: 0 10px 1px 14px; font-size: 11.3px; color: #4a4a4a; }
.tabs .on { position: relative; color: #222; font-weight: 500; margin: 0 -2px 0 5px; }
.tabs .on::after { content: ""; position: absolute; left: 0; right: 0; bottom: -6px; height: 2px; background: #217346; }
.bulb { margin-left: 11px; }
.tell { margin-left: -9px; color: #555; font-size: 11.8px; }
.share { margin-left: auto; width: 57px; height: 21px; background: #fbfbfa; display: flex; align-items: center; justify-content: center; gap: 4px; font-weight: 500; color: #3c5f6a; }

/* ribbon */
.ribbon { position: relative; flex: none; height: 80px; display: flex; border-bottom: 2px solid #dededc; font-size: 10px; }
.group { flex: none; display: flex; flex-direction: column; height: 78px; position: relative; }
.group::after { content: ""; position: absolute; right: 0; top: 3px; bottom: 0; width: 1px; background: #d6d6d4; }
.g-clip { width: 137px; }
.g-font { width: 192px; padding-left: 6px; }
.g-align { width: 232px; padding-left: 6px; }
.g-num { width: 130px; padding-left: 7px; }
.g-styles { width: 158px; padding-left: 9px; }
.g-cells { width: 118px; padding-left: 8px; }
.g-edit { width: 166px; padding-left: 8px; }
.gbody { flex: 1; display: flex; min-height: 0; }
.gbody.stack { flex-direction: column; gap: 8px; padding-top: 9px; }
.glabel { flex: none; height: 12px; line-height: 12px; font-size: 9.2px; text-align: center; color: #555; position: relative; padding-right: 10px; }
.glabel.lp { padding-right: 22px; }
.g-clip .glabel.lp { padding-right: 17px; }
.launcher { position: absolute; right: 3px; top: 2px; }
.paste { width: 44px; display: flex; flex-direction: column; align-items: center; color: #a9a9a9; padding-top: 5px; }
.paste span { line-height: 14px; margin-top: 1px; }
.paste .ch { margin-top: 4px; }
.small-col { display: flex; flex-direction: column; }
.small-col.ed { width: 77px; padding-left: 2px; }
.srow { height: 20px; margin-top: .5px; display: flex; align-items: center; gap: 3px; color: #4a4a4a; white-space: nowrap; }
.ed .srow { height: 19px; margin: 0; }
.srow svg:first-child { margin-right: 1px; }
.ml { margin-left: 6px; }
.ml10 { margin-left: 7px; }
.sigma { font-size: 16px; font-weight: 500; color: #444; width: 13px; line-height: 18px; margin-right: 3px; }

.trow { display: flex; align-items: center; height: 19px; flex: none; }
.combo { height: 19px; background: #fff; border: 1px solid #e0e0de; display: flex; align-items: center; justify-content: space-between; padding: 0 3px; color: #555; }
.w95 { width: 95px; margin-right: 3px; }
.w41 { width: 41px; }
.w116 { width: 116px; }
.ab { width: 19px; text-align: center; color: #555; font-size: 12px; line-height: 16px; white-space: nowrap; }
.ab sup { font-size: 7px; line-height: 0; vertical-align: 4px; }
.tb { display: flex; align-items: center; justify-content: center; height: 19px; flex: none; color: #555; font-size: 11px; }
.tb.active { background: #d4d4d2; border: 1px solid #a8a8a6; }
.w10 { width: 10px; }
.w14 { width: 14px; }
.w18 { width: 18px; }
.w19 { width: 19px; }
.w20 { width: 20px; }
.w22 { width: 22px; }
.serif { font-family: "Liberation Serif", serif; font-weight: 700; font-size: 12px; }
.vs { flex: none; width: 1px; height: 18px; margin: 0 2px 0 5px; background: #dcdcda; }
.vs.v3 { margin: 0 2px 0 3px; }
.vs.v12 { margin: 0 5px 0 12px; }
.vs.v4 { margin: 0 4px 0 4px; }
.vs.v2 { margin: 0 2px; }
.a-red { font-weight: 500; font-size: 13px; line-height: 14px; border-bottom: 3px solid #d81e26; height: 16px; margin: 0 2px 0 5px; width: 14px; color: #444; }
.wrap { display: flex; align-items: center; gap: 3px; color: #4a4a4a; position: relative; }
.wrap svg { margin-right: -1px; }
.ablab { position: absolute; left: 1px; top: -1px; font-size: 8px; line-height: 8px; }
.merge { width: 108px; height: 19px; display: flex; align-items: center; gap: 2px; padding: 0 4px 0 2px; background: #d4d4d2; border: 1px solid #a8a8a6; color: #4a4a4a; white-space: nowrap; }
.merge .ch { margin-left: auto; margin-right: 3px; }
.big-t { font-size: 14px; }
.t6 { font: 6px Roboto, sans-serif; fill: #555; }
.big { display: flex; flex-direction: column; align-items: center; flex: none; line-height: 13px; padding-top: 3px; color: #4a4a4a; white-space: nowrap; }
.big > svg { margin-bottom: 2px; }
.big .ch { margin-left: 3px; vertical-align: 1px; }
.chline .ch { margin-left: 0; }
.w54 { width: 54px; }
.w32 { width: 32px; }
.w34 { width: 34px; }
.w36 { width: 36px; }
.az { font: 500 13px Roboto, sans-serif; }
.a1 { fill: #2e75b6; }
.a2 { fill: #7c4f9e; }
.collapse { position: absolute; left: 1264px; top: 70px; }

/* quick access */
.qat { flex: none; height: 27px; display: flex; align-items: center; padding-left: 7px; border-bottom: 1px solid #d8d8d6; }
.q-undo { margin-left: 10px; }
.q-ch { margin: 0 6px 0 4px; }
.q-redo { margin-left: 1px; }
.q-more { margin-left: 8px; }

/* formula bar */
.formula { flex: none; height: 35px; display: flex; align-items: center; padding: 1px 5px 0 4px; background: #efefed; font-size: 11px; color: #444; }
.namebox { width: 84px; height: 18px; background: #fff; border: 1px solid #e2e2e0; display: flex; align-items: center; justify-content: space-between; padding: 0 3px; }
.dots { width: 25px; text-align: center; color: #999; font-size: 12px; line-height: 18px; }
.fx-box { width: 91px; height: 18px; background: #fff; border: 1px solid #e2e2e0; display: flex; align-items: center; color: #bbb; padding-left: 9px; gap: 21px; font-size: 11px; }
.fx-box .fx { font-family: "Liberation Serif", serif; font-style: italic; color: #555; font-size: 13px; }
.finput { flex: 1; margin-left: 3px; height: 18px; background: #fff; border: 1px solid #e2e2e0; display: flex; align-items: center; justify-content: space-between; padding: 0 4px 0 9px; }

/* sheet */
.grid-wrap { flex: none; height: 453px; display: flex; background: #fff; overflow: hidden; }
.sheet { position: relative; width: 1263px; flex: none; display: flex; overflow: hidden; border-right: 2px solid #c8c8c8; }
.rowhdr { width: 22px; flex: none; display: flex; flex-direction: column; background: #e6e6e6; border-right: 1px solid #c4c4c4; }
.corner { height: 17px; flex: none; display: flex; align-items: flex-end; justify-content: flex-end; padding: 0 2px 2px 0; border-bottom: 1px solid #aaa; }
.rh { flex: none; height: 14.67px; line-height: 14px; text-align: center; font-size: 11px; color: #444; border-bottom: 1px solid #d2d2d2; }
.rh.h4 { height: 14.4px; }
.col { flex: none; display: flex; flex-direction: column; background: #fff; }
.w15 { width: 15px; }
.w16 { width: 16px; }
.w27 { width: 27px; }
.w31 { width: 31px; }
.w47 { width: 47px; }
.w48 { width: 48px; }
.w237 { width: 237px; }
.colh { flex: none; height: 17px; background: #e6e6e6; border-right: 1px solid #c6c6c6; border-bottom: 1px solid #aaa; text-align: center; font-size: 11px; line-height: 17px; color: #444; }
.colh.yh { padding-left: 17px; }
.selh { background: #d2d2d2; border-bottom: 1px solid #217346; }
.hd { flex: none; height: 14.4px; border-right: 1px solid #888; border-bottom: 1px solid #666; text-align: center; font: 700 11px/13px Lato, "Liberation Sans", sans-serif; color: #111; }
.edge { border-left: 1px solid #888; }
.blank.hd-b { flex: none; height: 14.4px; border-bottom: 1px solid #d0d0d0; }
.gc .gridbody, .gc .blank { border-right: 1px solid #d0d0d0; }
.gridbody { flex: 1; background: repeating-linear-gradient(to bottom, transparent 0, transparent 13.67px, #d6d6d6 13.67px, #d6d6d6 14.67px); }
.notes { font: 10.5px/15.8px Lato, "Liberation Sans", sans-serif; color: #333; overflow: hidden; }
.notes div { height: 14.67px; padding-left: 4px; white-space: nowrap; overflow: hidden; }
.c { flex: none; height: 14.67px; border-right: 1px solid #333; border-bottom: 1px solid #333; text-align: right; padding-right: 3px; font: 700 11px/15px Lato, "Liberation Sans", sans-serif; color: #000; }
.pt { flex: none; display: flex; align-items: center; justify-content: center; border-right: 1px solid #444; border-bottom: 1px solid #444; font: 700 11px Lato, "Liberation Sans", sans-serif; color: #000; }
.r4 { height: 58.68px; }
.r8 { height: 117.36px; }
.r16 { height: 234.72px; }
.dn { background: #fff; font-size: 10.5px; }
.dn.plain { font-weight: 400; color: #333; }
.sel { position: relative; height: 235.72px; margin-top: -1px; border-left: 1px solid #4e8a68; border-right: 1px solid #4e8a68; border-top: 1px solid #4e8a68; }
.y { background: #ffff00; }
.r { background: #ff0000; }
.o { background: #ffc000; }
.g { background: #92d050; }
.s { background: #00b0f0; }
.b { background: #0070c0; color: #fff; }
.n { background: #002060; color: #fff; }
.p { background: #7030a0; color: #fff; }
.pe { background: #f8cbad; }
.lg { background: #a9d18e; }
.br { background: #c55a11; }
.c.r { color: #700000; }
.cell-cursor { position: absolute; left: 783px; top: 135px; }

/* vertical scrollbar */
.vscroll { width: 17px; flex: none; display: flex; flex-direction: column; align-items: center; background: #f0f0ee; padding: 2px 0 0; }
.sbtn { width: 13px; height: 12px; flex: none; background: #fff; border: 1px solid #8a8a8a; display: flex; align-items: center; justify-content: center; }
.vtrack { flex: 1; width: 15px; background: #e2e2e2; padding-top: 31px; }
.vthumb { height: 181px; background: #fff; border: 1px solid #a8a8a8; }

/* sheet tabs */
.tabstrip { position: relative; flex: none; height: 20px; display: flex; align-items: flex-start; background: #e9e9e7; border-top: 1px solid #bdbdbd; font-size: 11px; }
.tabnav { width: 69px; display: flex; gap: 13px; padding: 2px 0 0 17px; color: #bbb; font-size: 9px; }
.sheet-tab { width: 52px; height: 17px; background: #fff; border-bottom: 2px solid #217346; text-align: center; color: #217346; font-weight: 700; font-size: 12px; line-height: 14px; }
.add { margin: 2px 0 0 22px; }
.hdots { margin-left: 601px; color: #aaa; line-height: 18px; }
.hscroll { margin-left: 7px; margin-top: 2px; width: 484px; height: 14px; display: flex; background: #fff; border: 1px solid #c0c0c0; }
.hbtn { width: 12px; flex: none; display: flex; align-items: center; justify-content: center; border-right: 1px solid #888; }
.hthumb { flex: 1; }
.video-ov { position: absolute; left: 1214px; top: -2px; width: 52px; height: 26px; background: rgba(130,130,130,.75); display: flex; align-items: center; justify-content: space-around; z-index: 2; }

/* status */
.status { flex: none; height: 17px; display: flex; align-items: center; background: #f4f4f2; border-top: 1px solid #d8d8d6; font-size: 9.5px; color: #666; padding-left: 6px; }
.macro { margin-left: 16px; }
.views { margin-left: 977px; display: flex; }
.view { width: 33px; height: 17px; display: flex; align-items: center; justify-content: center; }
.view.on { background: #d8d8d6; }
.zm { margin-left: 5px; font-size: 11px; }
.slider { width: 84px; height: 1px; background: #888; margin-left: 5px; position: relative; }
.slider i { position: absolute; left: 37px; top: -4px; width: 3px; height: 9px; background: #666; }
.slider + .zm { margin-left: 4px; }
.pct { margin-left: 11px; color: #999; }

/* taskbar */
.taskbar { flex: none; height: 33px; display: flex; align-items: center; background: #1b3340; color: #eef2f4; font-size: 12px; }
.start { width: 40px; height: 33px; display: flex; align-items: center; justify-content: center; }
.search { width: 287px; height: 33px; background: #f3f3f3; display: flex; align-items: center; padding-left: 11px; gap: 9px; color: #333; font-size: 13px; }
.apps { display: flex; }
.app-i { position: relative; width: 36.7px; height: 33px; display: flex; align-items: center; justify-content: center; }
.app-i.wide { width: 40px; }
.app-i.run::after { content: ""; position: absolute; left: 4px; right: 4px; bottom: 0; height: 2px; background: #7cc0e8; }
.app-i.cur { background: #33505e; }
.badge { position: absolute; right: 2px; bottom: 6px; height: 10px; line-height: 10px; padding: 0 2px; border-radius: 5px; font-size: 7px; font-style: normal; color: #fff; }
.badge.grey { background: #8d9498; }
.badge.red { background: #e0352b; }
.xl { font: 700 7px Roboto, sans-serif; fill: #fff; }
.tray { display: flex; align-items: center; margin-left: 20.5px; flex: 1; }
.weather { width: 26px; }
.temp { width: 33px; padding-left: 3px; font-size: 12px; margin-right: 3px; }
.ti { width: 19.8px; display: flex; justify-content: center; }
.eng { width: 30px; text-align: center; font-size: 11px; margin-left: 1px; }
.clock { width: 56px; display: flex; flex-direction: column; align-items: center; font-size: 10.5px; line-height: 15px; white-space: nowrap; }
.notif { width: 36px; display: flex; justify-content: center; }
```
